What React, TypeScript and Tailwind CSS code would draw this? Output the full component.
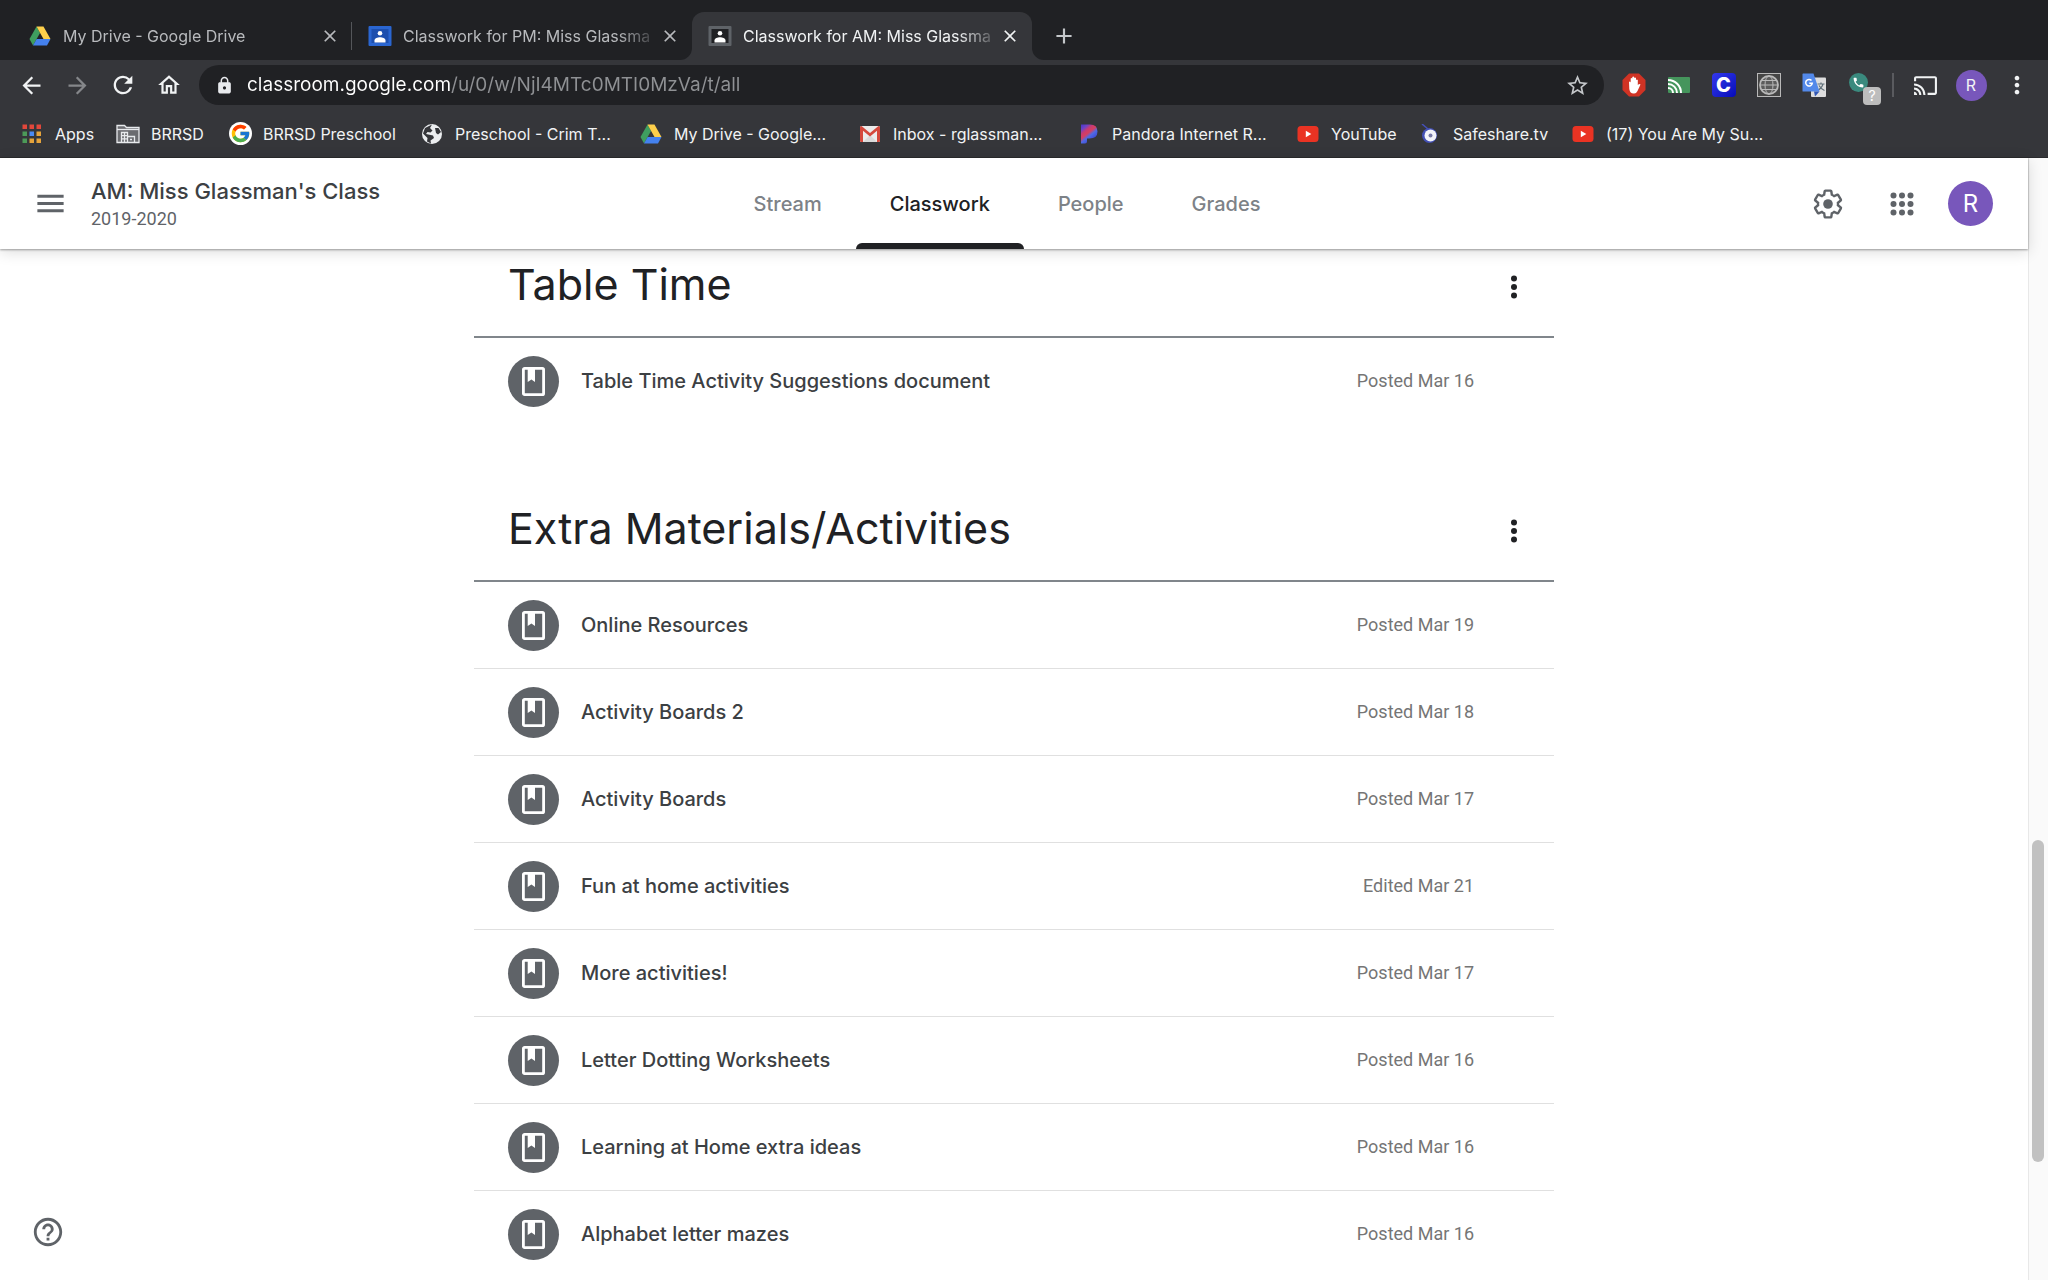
import type { ReactNode } from "react"
import { FcGoogle } from "react-icons/fc"
import {
  MdAdd,
  MdArrowBack,
  MdArrowForward,
  MdCast,
  MdClose,
  MdHelpOutline,
  MdLock,
  MdMenu,
  MdMoreVert,
  MdOutlineHome,
  MdPhone,
  MdRefresh,
  MdStarBorder,
} from "react-icons/md"

function DriveIcon() {
  return (
    <svg viewBox="0 0 22 20" className="h-5 w-[22px]">
      <path d="M7.5 0.5 L0.5 13 L4 19.5 L11 7Z" fill="#3f9e5f" />
      <path d="M7.5 0.5 H14.5 L21.5 13 H14.5Z" fill="#fdcf4b" />
      <path d="M4 19.5 L7.6 13 H21.5 L18 19.5Z" fill="#4481ee" />
    </svg>
  )
}

function ClassroomIcon({ frame, board }: { frame: string; board: string }) {
  return (
    <svg viewBox="0 0 24 20" className="h-5 w-6">
      <rect x="0.5" width="23" height="20" rx="1" fill={frame} />
      <rect x="3.5" y="3" width="17" height="14" fill={board} />
      <circle cx="12" cy="7.3" r="2.3" fill="#fff" />
      <path d="M6.5 16.5 V14.5 C6.5 12 9.5 11.2 12 11.2 S17.5 12 17.5 14.5 V16.5Z" fill="#fff" />
    </svg>
  )
}

function AppsIcon() {
  const colors = ["#e2473b", "#e2473b", "#e2473b", "#4c9a58", "#4a8af4", "#e5a33b", "#4c9a58", "#e5a33b", "#e5a33b"]
  return (
    <svg viewBox="0 0 20 20" className="h-5 w-5">
      {colors.map((color, i) => (
        <rect key={i} x={(i % 3) * 7 + 0.5} y={Math.floor(i / 3) * 7 + 0.5} width="4.5" height="4.5" fill={color} />
      ))}
    </svg>
  )
}

function ManagedFolderIcon() {
  return (
    <svg viewBox="0 0 24 20" className="h-5 w-6" fill="none" stroke="#e8eaed" strokeWidth="1.3">
      <path d="M1 18.5 V1.5 H8.5 L10.5 3.5 H23 V18.5Z" fill="#6b6c70" />
      <path d="M1 5.5 H23" />
      <path d="M5.5 18 V8.5 H11.5 V18 M11.5 12.5 H18.5 V18 M5.5 11.7 H11.5 M5.5 14.8 H11.5 M8.5 8.5 V18 M14 15.5 H16" />
    </svg>
  )
}

function GoogleIcon() {
  return (
    <span className="flex h-[23px] w-[23px] items-center justify-center rounded-full bg-white">
      <FcGoogle size={21} />
    </span>
  )
}

function GlobeIcon() {
  return (
    <svg viewBox="0 0 22 22" className="h-[22px] w-[22px]">
      <circle cx="11" cy="11" r="10" fill="#eceef0" />
      <path
        d="M11 1.5 L9 5 L11.5 7.5 L9.5 9.5 L6.5 9 L5 11 L12 12.5 L13 15 L9.5 17.5 L10 20.5 L6 18.5 L6.5 15 L2 10.5 L4 5Z M14 5 L17.5 5 L20 9 L17 11.5 L15 10Z"
        fill="#35363a"
      />
    </svg>
  )
}

function GmailIcon() {
  return (
    <svg viewBox="0 0 22 18" className="h-[18px] w-[22px]">
      <rect x="1" y="1" width="20" height="16" rx="1.5" fill="#ececec" />
      <path d="M4 17 L11 10 L18 17Z" fill="#d9d9d9" />
      <path d="M1 2.5 V15.5 Q1 17 2.5 17 H4 V5.8 L11 11.5 L18 5.8 V17 H19.5 Q21 17 21 15.5 V2.5 Q21 1 19.5 1 L11 8 L2.5 1 Q1 1 1 2.5Z" fill="#d5493d" />
    </svg>
  )
}

function PandoraIcon() {
  return (
    <svg viewBox="0 0 20 20" className="h-5 w-5">
      <defs>
        <linearGradient id="pandora" x1="0" y1="0" x2="0.7" y2="1">
          <stop offset="0" stopColor="#4a35c8" />
          <stop offset="0.2" stopColor="#6a44c8" />
          <stop offset="0.35" stopColor="#c93a72" />
          <stop offset="0.5" stopColor="#d63f60" />
          <stop offset="0.65" stopColor="#4c6ae6" />
          <stop offset="1" stopColor="#3b33c4" />
        </linearGradient>
      </defs>
      <path d="M2 0.5 H11 Q18.5 0.5 18.5 7.5 Q18.5 14.5 10.5 14.5 H8 V17.5 Q8 19.5 6 19.5 H2Z" fill="url(#pandora)" />
    </svg>
  )
}

function YouTubeIcon() {
  return (
    <svg viewBox="0 0 22 16" className="h-4 w-[22px]">
      <rect x="0.5" width="21" height="16" rx="3.5" fill="#ea3323" />
      <path d="M8.8 4.8 L14.3 8 L8.8 11.2Z" fill="#fff" />
    </svg>
  )
}

function SafeshareIcon() {
  return (
    <svg viewBox="0 0 20 20" className="h-5 w-5">
      <path d="M2 0 L8 5" stroke="#4450b8" strokeWidth="1.5" />
      <circle cx="9.5" cy="11.5" r="7.5" fill="#4350b5" />
      <circle cx="10.5" cy="11.5" r="6" fill="#f3f4fa" />
      <circle cx="10.5" cy="11.5" r="2" fill="#777aa8" />
    </svg>
  )
}

function GearIcon() {
  return (
    <svg viewBox="0 0 24 24" className="h-8 w-8" fill="none" stroke="#5f6368" strokeWidth="1.8">
      <path d="M19.43 12.98c.04-.32.07-.64.07-.98 0-.34-.03-.66-.07-.98l2.11-1.65c.19-.15.24-.42.12-.64l-2-3.46a.5.5 0 0 0-.61-.22l-2.49 1c-.52-.4-1.08-.73-1.69-.98l-.38-2.65A.488.488 0 0 0 14 2h-4c-.25 0-.46.18-.49.42l-.38 2.65c-.61.25-1.17.59-1.69.98l-2.49-1a.5.5 0 0 0-.61.22l-2 3.46c-.13.22-.07.49.12.64l2.11 1.65c-.04.32-.07.65-.07.98s.03.66.07.98l-2.11 1.65c-.19.15-.24.42-.12.64l2 3.46a.5.5 0 0 0 .61.22l2.49-1c.52.4 1.08.73 1.69.98l.38 2.65c.03.24.24.42.49.42h4c.25 0 .46-.18.49-.42l.38-2.65c.61-.25 1.17-.59 1.69-.98l2.49 1a.5.5 0 0 0 .61-.22l2-3.46c.12-.22.07-.49-.12-.64l-2.11-1.65z" />
      <circle cx="12" cy="12" r="3.6" fill="#5f6368" stroke="none" />
    </svg>
  )
}

function LauncherIcon() {
  return (
    <svg viewBox="0 0 24 24" className="h-6 w-6" fill="#5f6368">
      {[3.5, 12, 20.5].map((y) => [3.5, 12, 20.5].map((x) => <circle key={`${x}-${y}`} cx={x} cy={y} r="3" />))}
    </svg>
  )
}

function MaterialIcon() {
  return (
    <span className="flex h-[51px] w-[51px] shrink-0 items-center justify-center rounded-full bg-[#5f6368]">
      <svg viewBox="0 0 23 29" className="h-[29px] w-[23px]">
        <rect x="1.4" y="1.4" width="20.2" height="26.2" rx="1.2" fill="none" stroke="#fff" strokeWidth="2.8" />
        <path d="M5.7 1 H13 V15 L9.4 12.6 L5.7 15Z" fill="#fff" />
      </svg>
    </span>
  )
}

function DotsIcon() {
  return (
    <svg viewBox="0 0 8 24" className="h-6 w-2" fill="#202124">
      <circle cx="4" cy="3.5" r="3" />
      <circle cx="4" cy="12" r="3" />
      <circle cx="4" cy="20.5" r="3" />
    </svg>
  )
}

function TabCurve({ side }: { side: "left" | "right" }) {
  return (
    <svg
      viewBox="0 0 12 12"
      className={side === "left" ? "absolute bottom-0 -left-3 h-3 w-3" : "absolute bottom-0 -right-3 h-3 w-3"}
    >
      <path d={side === "left" ? "M12 0 V12 H0 A12 12 0 0 0 12 0Z" : "M0 0 V12 H12 A12 12 0 0 1 0 0Z"} fill="#35363a" />
    </svg>
  )
}

const browserTabs = [
  { title: "My Drive - Google Drive", icon: <DriveIcon />, active: false, divider: true },
  {
    title: "Classwork for PM: Miss Glassma",
    icon: <ClassroomIcon frame="#2a66d1" board="#1d4fae" />,
    active: false,
    divider: false,
  },
  {
    title: "Classwork for AM: Miss Glassma",
    icon: <ClassroomIcon frame="#5f6368" board="#202124" />,
    active: true,
    divider: false,
  },
]

function TabStrip() {
  return (
    <div className="flex h-[60px] items-end bg-[#202124] pl-3">
      {browserTabs.map((tab) => (
        <div
          key={tab.title}
          className={`relative flex h-12 w-[340px] items-center px-4 ${
            tab.active ? "rounded-t-xl bg-[#35363a] text-[#f1f3f4]" : "text-[#b8babd]"
          }`}
        >
          {tab.active && <TabCurve side="left" />}
          <span className="flex w-6 shrink-0 justify-center">{tab.icon}</span>
          <span className="ml-[11px] flex-1 text-base whitespace-nowrap [mask-image:linear-gradient(to_right,black_86%,rgba(0,0,0,0.2))]">
            {tab.title}
          </span>
          <button aria-label="Close tab" className="-mr-1 ml-2 shrink-0">
            <MdClose size={20} />
          </button>
          {tab.active && <TabCurve side="right" />}
          {tab.divider && <span className="absolute top-2.5 right-0 h-7 w-px bg-[#54565a]" />}
        </div>
      ))}
      <button aria-label="New tab" className="ml-[19px] flex h-12 items-center text-[#c4c7ca]">
        <MdAdd size={26} />
      </button>
    </div>
  )
}

function ToolButton({ label, dim, children }: { label: string; dim?: boolean; children: ReactNode }) {
  return (
    <button
      aria-label={label}
      className={`flex h-10 w-[46px] items-center justify-center ${dim ? "text-[#85878a]" : "text-[#f1f3f4]"}`}
    >
      {children}
    </button>
  )
}

function Extensions() {
  return (
    <div className="ml-[7px] flex shrink-0 items-center">
      <button aria-label="Ad blocker" className="flex w-[45px] justify-center">
        <svg viewBox="0 0 24 24" className="h-6 w-6">
          <path d="M7 0.5 H17 L23.5 7 V17 L17 23.5 H7 L0.5 17 V7Z" fill="#d03324" />
          <path
            d="M7 9 Q8 8 8.7 9.5 V5.5 Q9.5 4.3 10.3 5.5 V4 Q11.3 2.8 12.2 4 V5 Q13.2 3.8 14 5 V7 Q15 5.8 15.8 7 V12 Q17.5 10.5 18.5 11.5 L15.5 18 Q14 21 11.5 20.5 Q8 20.5 7.3 16Z"
            fill="#fff"
          />
        </svg>
      </button>
      <button aria-label="Share to class" className="flex w-[45px] justify-center">
        <svg viewBox="0 0 22 16" className="h-4 w-[22px]">
          <rect width="22" height="16" rx="1" fill="#45955c" />
          <g fill="none" stroke="#fff" strokeWidth="2">
            <path d="M0 11 A5 5 0 0 1 5 16" />
            <path d="M0 7 A9 9 0 0 1 9 16" />
            <path d="M0 3 A13 13 0 0 1 13 16" />
          </g>
        </svg>
      </button>
      <button aria-label="Clever" className="flex w-[45px] justify-center">
        <span className="flex h-6 w-6 items-center justify-center rounded bg-linear-to-br from-[#3337ee] to-[#0508b8] text-xl font-extrabold text-white">
          C
        </span>
      </button>
      <button aria-label="Web globe" className="flex w-[45px] justify-center">
        <svg viewBox="0 0 24 24" className="h-6 w-6" fill="none" stroke="#b9b9b9">
          <rect x="0.5" y="0.5" width="23" height="23" fill="#454545" />
          <circle cx="12" cy="12" r="9" fill="#5c5c5c" strokeWidth="1.8" />
          <ellipse cx="12" cy="12" rx="4" ry="9" />
          <path d="M3 12 H21 M4.5 7.5 H19.5 M4.5 16.5 H19.5" />
        </svg>
      </button>
      <button aria-label="Translate" className="flex w-[45px] justify-center">
        <svg viewBox="0 0 24 24" className="h-6 w-6">
          <rect x="9" y="4.5" width="15" height="19.5" rx="1" fill="#dedede" />
          <path d="M15.5 11 H22.5 M19 9.5 V11 M21 11 Q20 15 15.5 17.5 M17 12.5 Q19 16 22.5 17.5" stroke="#61717a" strokeWidth="1.2" fill="none" />
          <path d="M1 0.5 H11.5 L17.5 18.5 H1 Q0.5 18.5 0.5 18 V1Z" fill="#5389ea" />
          <path d="M12 18.5 H17.5 L13 23.5Z" fill="#3257b4" />
          <path d="M9.5 7.5 A3.3 3.3 0 1 0 10.3 10.2 H7.3" stroke="#fff" strokeWidth="1.5" fill="none" />
        </svg>
      </button>
      <button aria-label="Google Voice" className="relative flex w-[45px] justify-center">
        <span className="flex h-6 w-5 items-start justify-center">
          <span className="flex h-[19px] w-[19px] items-center justify-center rounded-full bg-[#3a8a7e] text-white">
            <MdPhone size={13} />
          </span>
        </span>
        <span className="absolute top-3.5 right-0 flex h-[18px] w-[18px] items-center justify-center rounded-sm bg-[#bdbdbd] text-sm text-white">
          ?
        </span>
      </button>
      <span className="mr-2 ml-[11px] h-6 w-0.5 bg-[#5a5b5f]" />
    </div>
  )
}

function Toolbar() {
  return (
    <div className="flex h-[50px] items-center bg-[#35363a] px-2">
      <ToolButton label="Back">
        <MdArrowBack size={27} />
      </ToolButton>
      <ToolButton label="Forward" dim>
        <MdArrowForward size={27} />
      </ToolButton>
      <ToolButton label="Reload">
        <MdRefresh size={28} />
      </ToolButton>
      <ToolButton label="Home">
        <MdOutlineHome size={26} />
      </ToolButton>
      <div className="ml-[7px] flex h-10 flex-1 items-center rounded-full bg-[#202124] pr-3.5 pl-4 text-[#e8eaed]">
        <MdLock size={19} />
        {/* host is bright, the path after it is dimmed */}
        <input
          type="text"
          aria-label="Address"
          defaultValue="classroom.google.com/u/0/w/NjI4MTc0MTI0MzVa/t/all"
          className="ml-[13px] flex-1 bg-linear-to-r from-white from-[204px] to-[#8f9194] to-[204px] bg-clip-text text-[19px] text-transparent outline-none"
        />
        <button aria-label="Bookmark this page" className="text-[#c4c7ca]">
          <MdStarBorder size={25} />
        </button>
      </div>
      <Extensions />
      <ToolButton label="Cast">
        <MdCast size={25} />
      </ToolButton>
      <ToolButton label="Profile">
        <span className="flex h-[31px] w-[31px] items-center justify-center rounded-full bg-[#7857bb] text-base">R</span>
      </ToolButton>
      <ToolButton label="Browser menu">
        <MdMoreVert size={28} />
      </ToolButton>
    </div>
  )
}

const bookmarks = [
  { label: "Apps", icon: <AppsIcon />, width: "w-24" },
  { label: "BRRSD", icon: <ManagedFolderIcon />, width: "w-28" },
  { label: "BRRSD Preschool", icon: <GoogleIcon />, width: "w-48" },
  { label: "Preschool - Crim T...", icon: <GlobeIcon />, width: "w-[219px]" },
  { label: "My Drive - Google...", icon: <DriveIcon />, width: "w-[219px]" },
  { label: "Inbox - rglassman...", icon: <GmailIcon />, width: "w-[219px]" },
  { label: "Pandora Internet R...", icon: <PandoraIcon />, width: "w-[219px]" },
  { label: "YouTube", icon: <YouTubeIcon />, width: "w-[122px]" },
  { label: "Safeshare.tv", icon: <SafeshareIcon />, width: "w-[153px]" },
  { label: "(17) You Are My Su...", icon: <YouTubeIcon />, width: "w-[219px]" },
]

function BookmarksBar() {
  return (
    <nav className="flex h-12 items-center border-b border-[#2a2b2e] bg-[#35363a] pl-5 text-base text-[#f1f3f4]">
      {bookmarks.map((item) => (
        <a key={item.label} href="#" className={`flex items-center gap-[11px] whitespace-nowrap ${item.width}`}>
          <span className="flex w-6 shrink-0 justify-center">{item.icon}</span>
          {item.label}
        </a>
      ))}
    </nav>
  )
}

const classTabs = [
  { label: "Stream", active: false },
  { label: "Classwork", active: true },
  { label: "People", active: false },
  { label: "Grades", active: false },
]

function ClassHeader() {
  return (
    <header className="relative z-10 grid h-[91px] shrink-0 grid-cols-[1fr_auto_1fr] bg-white shadow-[0_1px_2px_rgba(0,0,0,0.35),0_3px_14px_rgba(0,0,0,0.14)]">
      <div className="flex items-center">
        <button aria-label="Main menu" className="ml-[33px] text-[#5f6368]">
          <MdMenu size={35} />
        </button>
        <div className="ml-[23px] pt-0.5">
          <h1 className="text-[22px] leading-7 font-medium text-[#3c4043]">AM: Miss Glassman's Class</h1>
          <p className="font-['Roboto',sans-serif] text-lg leading-7 text-[#5f6368]">2019-2020</p>
        </div>
      </div>
      <nav className="mr-3.5 flex">
        {classTabs.map((tab) => (
          <a
            key={tab.label}
            href="#"
            className={`relative flex items-center px-[34px] text-[20px] font-medium ${
              tab.active ? "text-[#202124]" : "text-[#7d8287]"
            }`}
          >
            {tab.label}
            {tab.active && <span className="absolute inset-x-0 bottom-0 h-1.5 rounded-t-md bg-[#202124]" />}
          </a>
        ))}
      </nav>
      <div className="flex items-center justify-end pr-[35px] text-[#5f6368]">
        <button aria-label="Class settings">
          <GearIcon />
        </button>
        <button aria-label="Google apps" className="ml-[46px]">
          <LauncherIcon />
        </button>
        <button
          aria-label="Account"
          className="ml-[34px] flex h-[45px] w-[45px] items-center justify-center rounded-full bg-[#7857bb] text-2xl text-white"
        >
          R
        </button>
      </div>
    </header>
  )
}

const topics = [
  {
    title: "Table Time",
    items: [{ title: "Table Time Activity Suggestions document", date: "Posted Mar 16" }],
  },
  {
    title: "Extra Materials/Activities",
    items: [
      { title: "Online Resources", date: "Posted Mar 19" },
      { title: "Activity Boards 2", date: "Posted Mar 18" },
      { title: "Activity Boards", date: "Posted Mar 17" },
      { title: "Fun at home activities", date: "Edited Mar 21" },
      { title: "More activities!", date: "Posted Mar 17" },
      { title: "Letter Dotting Worksheets", date: "Posted Mar 16" },
      { title: "Learning at Home extra ideas", date: "Posted Mar 16" },
      { title: "Alphabet letter mazes", date: "Posted Mar 16" },
    ],
  },
]

function Topic({ topic }: { topic: (typeof topics)[number] }) {
  return (
    <section>
      <div className="flex h-[89px] items-center justify-between border-b-2 border-[#80868b] pr-5 pb-3 pl-[34px]">
        <h2 className="pb-1 text-[43px] leading-none text-[#202124]">{topic.title}</h2>
        <button aria-label={`Options for ${topic.title}`} className="flex h-10 w-10 items-center justify-center">
          <DotsIcon />
        </button>
      </div>
      <ul className="divide-y divide-[#e0e0e0]">
        {topic.items.map((item) => (
          <li key={item.title} className="box-content flex h-[86px] items-center pr-20 pl-[34px]">
            <MaterialIcon />
            <a href="#" className="ml-[22px] flex-1 text-[20px] font-medium text-[#3c4043]">
              {item.title}
            </a>
            <span className="font-['Roboto',sans-serif] text-lg text-[#757575]">{item.date}</span>
          </li>
        ))}
      </ul>
    </section>
  )
}

export default function App() {
  return (
    <div className="flex h-screen flex-col overflow-hidden bg-white font-['Inter',sans-serif]">
      <TabStrip />
      <Toolbar />
      <BookmarksBar />
      <div className="flex min-h-0 flex-1">
        <div className="relative flex min-w-0 flex-1 flex-col">
          <ClassHeader />
          <main className="min-h-0 flex-1 overflow-hidden">
            <div className="mx-auto flex w-full max-w-[1080px] flex-col gap-[69px]">
              {topics.map((topic) => (
                <Topic key={topic.title} topic={topic} />
              ))}
            </div>
          </main>
          <button aria-label="Help" className="absolute bottom-[31px] left-[31px] text-[#5f6368]">
            <MdHelpOutline size={34} />
          </button>
        </div>
        <div className="w-5 border-l border-[#e8e8e8] bg-[#fafafa] pt-[682px] pl-[3px]">
          <div className="h-[322px] w-3 rounded-full bg-[#c1c1c1]" />
        </div>
      </div>
    </div>
  )
}
